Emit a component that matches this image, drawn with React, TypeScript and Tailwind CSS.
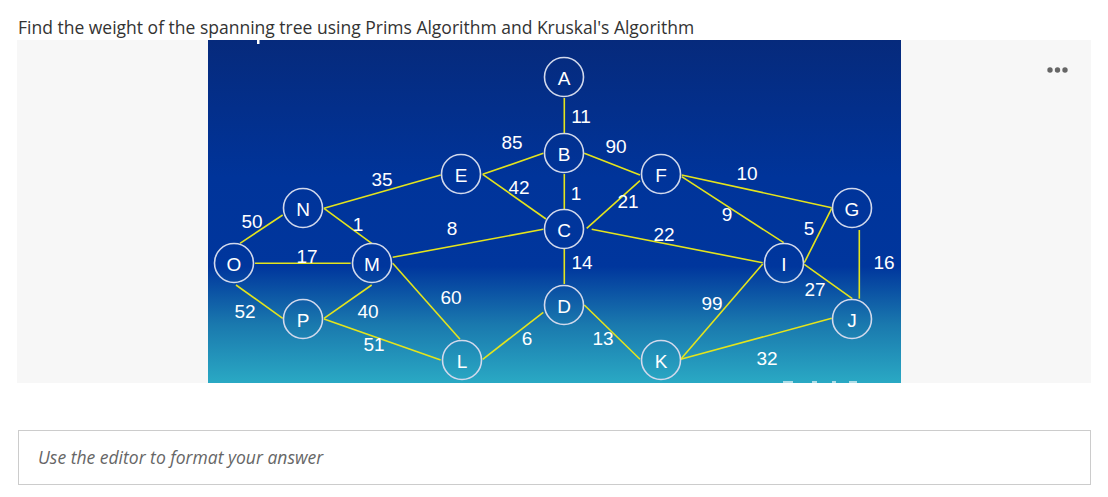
type Pt = [number, number];

// node centres, in page coordinates (the svg viewBox starts at 208,40)
const nodes: Array<{ id: string; at: Pt }> = [
  { id: "A", at: [564, 77] },
  { id: "B", at: [564, 153] },
  { id: "C", at: [564, 229] },
  { id: "D", at: [564, 305] },
  { id: "E", at: [461, 174] },
  { id: "F", at: [661, 174] },
  { id: "G", at: [852, 208] },
  { id: "I", at: [784, 263] },
  { id: "J", at: [852, 319] },
  { id: "K", at: [661, 360] },
  { id: "L", at: [462, 360] },
  { id: "M", at: [372, 263] },
  { id: "N", at: [303, 208] },
  { id: "O", at: [234, 263] },
  { id: "P", at: [303, 319] },
];

const edges: Array<[Pt, Pt]> = [
  [[564.3, 98], [564.3, 133]],
  [[564.3, 174], [564.3, 209]],
  [[564.3, 249], [564.3, 284]],
  [[482.7, 174.3], [543.3, 153.3]],
  [[482.7, 174.3], [546, 219]],
  [[324, 208.3], [440.7, 175]],
  [[584.3, 153.3], [640, 175]],
  [[640, 180.7], [586.7, 228.3]],
  [[681.7, 175], [831.7, 207.7]],
  [[681.7, 176.7], [783.7, 242.7]],
  [[591.7, 229.3], [762.7, 262.7]],
  [[831.7, 208.3], [804.3, 262.7]],
  [[859.3, 230], [859.3, 298.7]],
  [[804.3, 264.3], [852.3, 298.7]],
  [[762.7, 264], [680.7, 359.3]],
  [[680.7, 359.3], [831.7, 318.3]],
  [[584.3, 305], [640, 359.3]],
  [[482.7, 359.3], [543.3, 312.3]],
  [[392.7, 257.3], [543.3, 229.3]],
  [[392.7, 263.3], [460, 339.3]],
  [[324, 208.3], [371.7, 243.3]],
  [[240, 243.3], [282.7, 215]],
  [[255, 263.3], [350.7, 263.3]],
  [[236, 285], [282.7, 318.3]],
  [[324, 318.3], [371.7, 285]],
  [[324, 319], [440.7, 360]],
];

const weights: Array<[string, number, number]> = [
  ["85", 512, 142],
  ["35", 382, 179],
  ["42", 519, 187],
  ["11", 581, 116],
  ["90", 616, 146],
  ["1", 576, 193],
  ["10", 747, 173],
  ["21", 628, 201],
  ["50", 252, 221],
  ["1", 358, 224],
  ["8", 452, 228],
  ["17", 307, 256],
  ["60", 451, 297],
  ["52", 245, 311],
  ["40", 368, 311],
  ["51", 374, 344],
  ["6", 527, 338],
  ["22", 664, 234],
  ["9", 727, 214],
  ["5", 809, 228],
  ["14", 582, 262],
  ["16", 884, 262],
  ["27", 815, 289],
  ["99", 712, 303],
  ["13", 603, 338],
  ["32", 767, 358],
];

function GraphPicture() {
  return (
    <svg
      width={693}
      height={343}
      viewBox="208 40 693 343"
      className="block shrink-0"
      style={{ fontFamily: '"Liberation Sans", Arial, sans-serif' }}
    >
      <defs>
        <linearGradient id="bg" x1="0" y1="0" x2="0" y2="1">
          <stop offset="0" stopColor="#062a7c" />
          <stop offset="0.4" stopColor="#00349a" />
          <stop offset="0.66" stopColor="#00369d" />
          <stop offset="0.83" stopColor="#1a79ae" />
          <stop offset="1" stopColor="#2aa9c4" />
        </linearGradient>
      </defs>
      <rect x={208} y={40} width={693} height={343} fill="url(#bg)" />

      {/* bits of cropped slide text */}
      <rect x={257} y={40} width={2.5} height={4} fill="#fff" />
      <g fill="#dff0f5" opacity={0.75}>
        <rect x={783} y={381} width={10} height={2} />
        <rect x={812} y={381} width={5} height={2} />
        <rect x={832} y={381} width={4} height={2} />
        <rect x={849} y={381} width={8} height={2} />
      </g>

      {edges.map(([a, b], i) => (
        <line
          key={i}
          x1={a[0]}
          y1={a[1]}
          x2={b[0]}
          y2={b[1]}
          stroke="#e4e41c"
          strokeWidth={1.6}
        />
      ))}

      {nodes.map((n) => (
        <g key={n.id}>
          <circle cx={n.at[0]} cy={n.at[1]} r={19.5} fill="none" stroke="#d2d9ec" strokeWidth={1.6} />
          <text
            x={n.at[0]}
            y={n.at[1] + 1}
            fill="#fff"
            fontSize={19}
            textAnchor="middle"
            dominantBaseline="central"
          >
            {n.id}
          </text>
        </g>
      ))}

      {weights.map(([w, x, y], i) => (
        <text
          key={i}
          x={x}
          y={y}
          fill="#fff"
          fontSize={19}
          textAnchor="middle"
          dominantBaseline="central"
        >
          {w}
        </text>
      ))}
    </svg>
  );
}

function DotsIcon() {
  return (
    <svg width={24} height={8} viewBox="0 0 24 8" className="block">
      <circle cx={4} cy={4} r={2.7} fill="#666" />
      <circle cx={11.5} cy={4} r={2.7} fill="#666" />
      <circle cx={19} cy={4} r={2.7} fill="#666" />
    </svg>
  );
}

export default function App() {
  return (
    <div
      className="min-h-[497px] w-[1108px] bg-white text-[#333]"
      style={{ fontFamily: '"Open Sans", "Liberation Sans", sans-serif' }}
    >
      <p className="pl-[18px] pt-[14px] text-[17.5px] leading-[26px]">
        Find the weight of the spanning tree using Prims Algorithm and Kruskal's Algorithm
      </p>

      <div className="relative ml-[17px] flex h-[343px] w-[1074px] justify-center bg-[#f7f7f7]">
        <GraphPicture />
        <button className="absolute right-[21px] top-[26px]">
          <DotsIcon />
        </button>
      </div>

      <div className="ml-[18px] mt-[47px] flex h-[55px] w-[1073px] items-center border border-[#ccc] px-[19px]">
        <span className="text-[17.5px] italic text-[#666]">Use the editor to format your answer</span>
      </div>
    </div>
  );
}
